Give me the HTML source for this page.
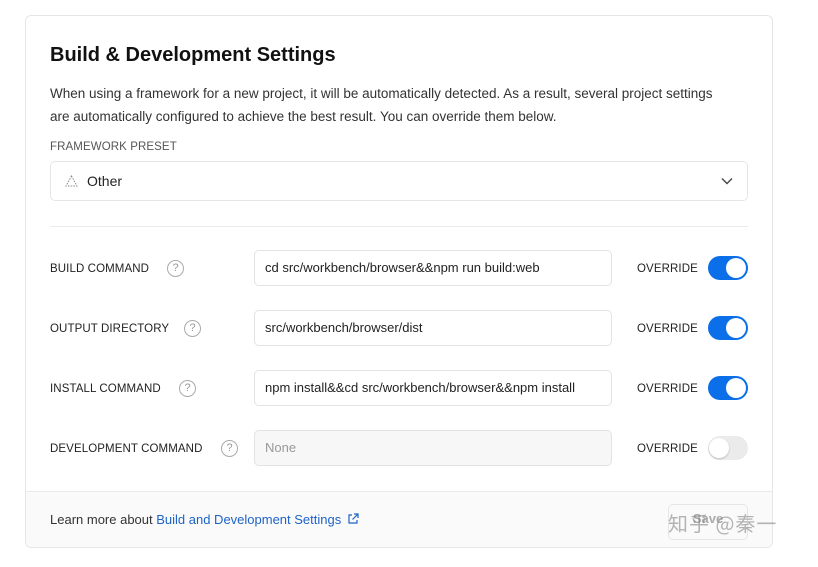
<!DOCTYPE html>
<html><head><meta charset="utf-8"><style>
*{box-sizing:border-box;margin:0;padding:0}
body{width:818px;height:567px;background:#fff;font-family:"Liberation Sans","Noto Sans CJK SC",sans-serif;color:#111;position:relative;overflow:hidden}
.card{position:absolute;left:25px;top:15px;width:748px;height:533px;border:1px solid #e6e6e6;border-radius:6px;overflow:hidden;background:#fff}
.a{position:absolute}
h1{position:absolute;left:24px;top:28px;font-size:20px;font-weight:600;color:#111}
.desc{left:24px;top:66px;font-size:13.5px;line-height:23px;color:#333;width:670px}
.lbl{font-size:11.5px;line-height:14px;color:#222;letter-spacing:.1px}
.sel{left:24px;top:145px;width:698px;height:40px;border:1px solid #e6e6e6;border-radius:5px;font-size:14px;line-height:38px;padding-left:36px;color:#222}
.hr{left:24px;top:210px;width:698px;height:1px;background:#eaeaea}
.inp{left:228px;width:358px;height:36px;border:1px solid #e3e3e3;border-radius:5px;font-size:13px;line-height:34px;padding-left:10px;color:#222;white-space:nowrap;overflow:hidden}
.q{width:17px;height:17px;border:1.3px solid #aaa;border-radius:50%;font-size:11px;color:#999;text-align:center;line-height:15px}
.tg{left:682px;width:40px;height:24px;border-radius:12px;background:#0a6fe8}
.tg::after{content:"";position:absolute;right:2px;top:2px;width:20px;height:20px;border-radius:50%;background:#fff}
.tg.off{background:#ebebeb}
.tg.off::after{right:auto;left:1px;box-shadow:0 1px 2px rgba(0,0,0,.2)}
.foot{left:0;top:475px;width:748px;height:58px;background:#fafafa;border-top:1px solid #eaeaea}
</style></head><body>
<div class="card">
<h1>Build &amp; Development Settings</h1>
<div class="a desc">When using a framework for a new project, it will be automatically detected. As a result, several project settings are automatically configured to achieve the best result. You can override them below.</div>
<div class="a lbl" style="left:24px;top:124px;color:#555">FRAMEWORK PRESET</div>
<div class="a sel">Other
<svg class="a" style="left:14px;top:13px" width="13" height="12" viewBox="0 0 13 12"><path d="M6.5 1L12 11H1Z" fill="none" stroke="#888" stroke-dasharray="1.5 1.2"/></svg>
<svg class="a" style="right:14px;top:15px" width="12" height="8" viewBox="0 0 12 8"><path d="M1 1.5l5 5 5-5" fill="none" stroke="#444" stroke-width="1.4"/></svg>
</div>
<div class="a hr"></div>

<div class="a lbl" style="left:24px;top:246px">BUILD COMMAND</div><div class="a q" style="left:141px;top:244px">?</div>
<div class="a inp" style="top:234px">cd src/workbench/browser&amp;&amp;npm run build:web</div>
<div class="a lbl" style="left:611px;top:246px">OVERRIDE</div><div class="a tg" style="top:240px"></div>

<div class="a lbl" style="left:24px;top:306px">OUTPUT DIRECTORY</div><div class="a q" style="left:158px;top:304px">?</div>
<div class="a inp" style="top:294px">src/workbench/browser/dist</div>
<div class="a lbl" style="left:611px;top:306px">OVERRIDE</div><div class="a tg" style="top:300px"></div>

<div class="a lbl" style="left:24px;top:366px">INSTALL COMMAND</div><div class="a q" style="left:153px;top:364px">?</div>
<div class="a inp" style="top:354px">npm install&amp;&amp;cd src/workbench/browser&amp;&amp;npm install</div>
<div class="a lbl" style="left:611px;top:366px">OVERRIDE</div><div class="a tg" style="top:360px"></div>

<div class="a lbl" style="left:24px;top:426px">DEVELOPMENT COMMAND</div><div class="a q" style="left:195px;top:424px">?</div>
<div class="a inp" style="top:414px;background:#f7f7f7;color:#999">None</div>
<div class="a lbl" style="left:611px;top:426px">OVERRIDE</div><div class="a tg off" style="top:420px"></div>

<div class="a foot">
<div class="a" style="left:24px;top:20px;font-size:13px;color:#333">Learn more about <span style="color:#1d63c8">Build and Development Settings</span>
<svg width="12" height="12" viewBox="0 0 12 12" style="vertical-align:-1px;margin-left:2px"><path d="M5 2H2v8h8V7M7 1h4v4M11 1L5.5 6.5" fill="none" stroke="#1d63c8" stroke-width="1.2"/></svg></div>
<div class="a" style="left:642px;top:12px;width:80px;height:36px;border:1px solid #e6e6e6;border-radius:5px;font-size:13px;font-weight:bold;color:#aaa;text-align:center;line-height:28px;background:#fafafa">Save</div>
</div>
</div>
<div class="a" style="left:668px;top:508px;font-size:20px;color:rgba(120,120,120,.55);font-family:'Noto Sans CJK SC',sans-serif;letter-spacing:1px">知乎 @秦一</div>
</body></html>
